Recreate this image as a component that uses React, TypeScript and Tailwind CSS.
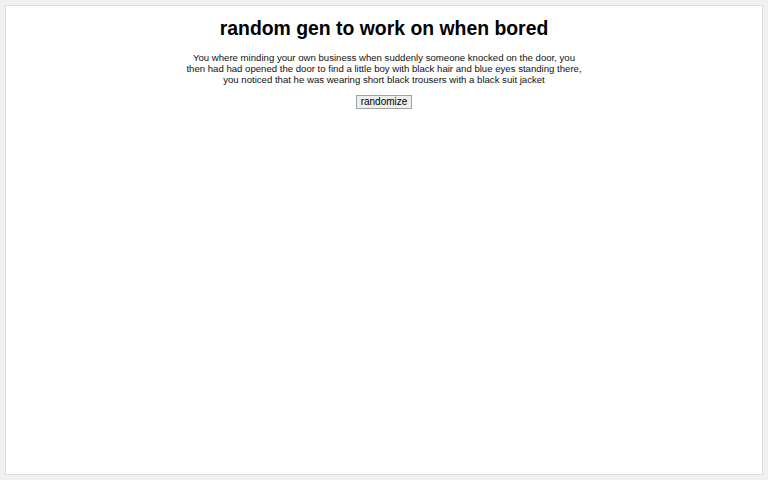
export default function App() {
    return (
        <div className="h-[480px] w-[768px] bg-[#f1f1f1] p-[5px]" style={{ fontFamily: '"Liberation Sans", Arial, sans-serif' }}>
            <div className="h-full w-full bg-white border border-[#dcdcdc] flex flex-col items-center text-black">
                <h1 className="mt-[10px] text-[19.4px] leading-[24px] font-bold">random gen to work on when bored</h1>

                <p className="mt-[12px] w-[402px] text-center text-[9.6px] leading-[11px] text-[#111]">
                    You where minding your own business when suddenly someone knocked on the door, you then had had opened the door to find a little boy with black hair and blue eyes standing there, you noticed that he was wearing short black trousers with a black suit jacket
                </p>

                <button className="mt-[10px] px-[4px] h-[14px] text-[10px] leading-[12px] bg-[#efefef] border border-[#a0a0a0]">
                    randomize
                </button>
            </div>
        </div>
    );
}
